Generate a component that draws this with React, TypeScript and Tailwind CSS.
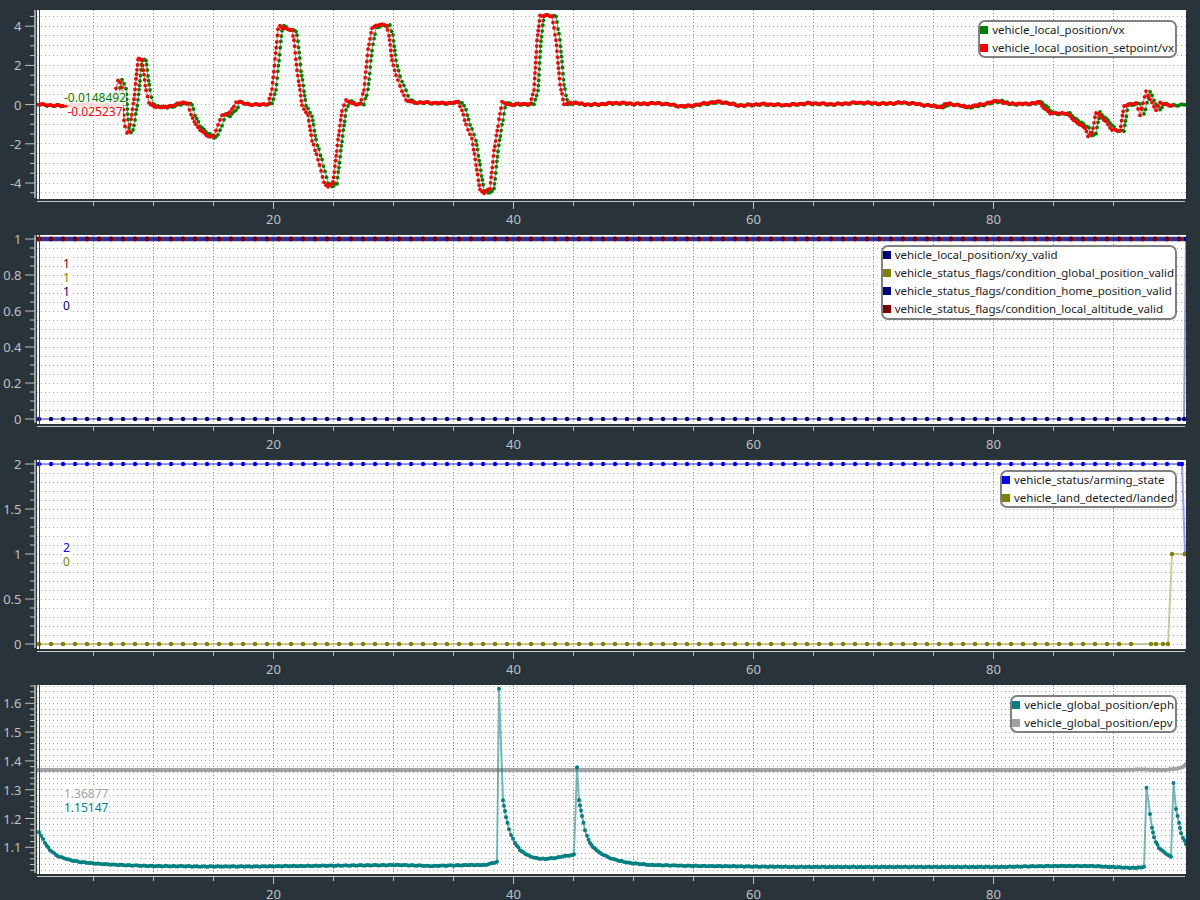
type Pt = [number, number]

const PLOT_L = 37
const PLOT_W = 1149
const PLOT_H = 189
const GRID_X = Array.from({ length: 18 }, (_, k) => 93.5 + 60 * k)

// split long segments so markers sit close on the flat parts and wider on slopes
function resample(keys: Pt[], flat: number, steep: number, maxSlope = Infinity): Pt[] {
  const out: Pt[] = []
  keys.forEach((p, i) => {
    if (i === 0) {
      out.push(p)
      return
    }
    const q = keys[i - 1]
    const dx = p[0] - q[0]
    const dy = p[1] - q[1]
    const slope = Math.abs(dy / (dx || 1))
    const len = Math.hypot(dx, dy)
    const n = slope > maxSlope ? 1 : Math.max(1, Math.round(Math.max(dx / flat, len / steep)))
    for (let j = 1; j <= n; j++) {
      out.push([q[0] + (dx * j) / n, q[1] + (dy * j) / n])
    }
  })
  return out
}

function wobble(pts: Pt[], amt: number, fine: number): Pt[] {
  return pts.map(([x, y]) => [x, y + amt * Math.sin(x * 0.13) + (amt / 2) * Math.sin(x * 0.41) + fine * Math.sin(x * 2.3)])
}

const vxKeys: Pt[] = [
  [37, 105], [63, 105], [100, 105], [114, 104], [116, 88], [118, 80], [120, 83], [122, 88], [124, 120], [125, 127],
  [127, 133], [129, 131], [131, 120], [134, 100], [136, 80], [138, 60], [139, 59], [142, 60], [144, 75], [146, 90],
  [149, 103], [152, 105], [156, 106], [165, 107], [175, 105], [183, 103], [188, 104], [191, 115], [196, 125], [200, 129],
  [206, 134], [210, 137], [214, 135], [218, 125], [222, 115], [226, 116], [230, 112], [234, 107], [236, 102], [250, 104],
  [268, 104], [272, 90], [275, 60], [278, 30], [280, 26], [284, 29], [292, 30], [294, 40], [297, 70], [300, 90],
  [302, 105], [308, 115], [312, 140], [318, 160], [324, 183], [328, 187], [333, 183], [338, 140], [342, 110], [346, 100],
  [352, 103], [360, 104], [364, 90], [368, 50], [372, 28], [380, 25], [386, 25], [389, 35], [392, 60], [396, 75],
  [400, 85], [406, 100], [414, 103], [430, 103], [458, 102], [462, 110], [466, 125], [472, 140], [476, 165], [480, 190],
  [484, 193], [490, 188], [494, 150], [498, 125], [502, 102], [510, 105], [530, 104], [534, 90], [537, 40], [540, 15],
  [546, 15], [552, 16], [556, 40], [560, 85], [564, 105], [570, 103], [585, 104], [650, 103], [680, 106], [720, 102],
  [740, 105], [800, 104], [870, 103], [900, 103], [930, 105], [941, 107], [946, 104], [960, 106], [965, 107], [980, 104],
  [998, 101], [1005, 104], [1030, 103], [1038, 102], [1044, 108], [1050, 114], [1066, 113], [1072, 118], [1085, 128], [1088, 136],
  [1092, 133], [1096, 113], [1106, 122], [1112, 130], [1120, 130], [1124, 105], [1136, 103], [1140, 115], [1146, 92], [1150, 100],
  [1156, 110], [1160, 103], [1172, 105],
]

const redVx = wobble(resample(vxKeys, 2, 5.5), 0.6, 0.5)
const greenVx = wobble(
  resample(
    vxKeys.map(([x, y]) => [x + 4, y + 0.3] as Pt).concat([[1186, 104]]),
    2,
    5.5,
  ),
  0.5,
  0.7,
)

const every12 = (to: number, y: number): Pt[] => {
  const pts: Pt[] = []
  for (let x = 39; x <= to; x += 12) pts.push([x, y])
  return pts
}

const ephKeys: Pt[] = [
  [39, 832], [45, 843], [50, 850], [56, 855], [60, 857], [70, 860], [80, 862], [100, 864], [120, 865], [150, 866],
  [200, 866.5], [250, 866.5], [300, 866], [400, 865], [430, 866], [470, 865], [485, 865], [497, 862], [499, 689], [503, 800],
  [506, 817], [509, 829], [511, 835], [515, 843], [520, 850], [527, 855], [535, 858], [545, 859], [555, 858], [565, 856],
  [573, 855], [574, 854], [577, 767], [579, 800], [582, 816], [585, 830], [587, 836], [590, 843], [593, 847], [600, 853],
  [610, 858], [620, 861], [630, 863], [650, 865], [700, 866], [800, 867], [900, 867], [1000, 867], [1050, 866], [1090, 866],
  [1135, 868], [1144, 867], [1146.5, 788], [1150, 814], [1152, 828], [1154, 837], [1156, 842], [1159, 848], [1165, 853], [1171, 857],
  [1173.5, 783], [1176, 809], [1179, 823], [1181, 833], [1183, 838], [1186, 844],
]

const epvKeys: Pt[] = [[37, 770], [1120, 770], [1140, 769.5], [1165, 770], [1178, 768.5], [1183, 767], [1186, 764]]

type Series = { color: string; pts: Pt[]; r?: number; line?: number; alpha?: number }

type PanelDef = {
  top: number
  y0: number
  perUnit: number
  minor: number
  majorEvery: number
  series: Series[]
  legend: { name: string; color: string }[]
  legendH: string
  labels: { text: string; color: string }[]
  labelPos: string
}

const panels: PanelDef[] = [
  {
    top: 10,
    y0: 104.6,
    perUnit: 19.6,
    minor: 0.5,
    majorEvery: 4,
    series: [
      { color: "#008000", pts: greenVx, r: 1.9, line: 1.2 },
      { color: "#ff0000", pts: redVx, r: 1.9, line: 1.2 },
    ],
    legend: [
      { name: "vehicle_local_position/vx", color: "#008000" },
      { name: "vehicle_local_position_setpoint/vx", color: "#ff0000" },
    ],
    legendH: "h-[38px]",
    labels: [
      { text: "-0.0148492", color: "#008000" },
      { text: "-0.025237", color: "#ff0000" },
    ],
    labelPos: "left-[27px] top-[81px]",
  },
  {
    top: 235,
    y0: 419,
    perUnit: 180,
    minor: 0.05,
    majorEvery: 4,
    series: [
      { color: "#000080", pts: [...every12(1184, 419), [1184, 419], [1186, 239]], r: 2.2, alpha: 0.4 },
      { color: "#000080", pts: [[37, 239], [1186, 239]], r: 0, line: 4.5, alpha: 0.8 },
      { color: "#800000", pts: every12(1186, 239), r: 2.4, line: 0 },
    ],
    legend: [
      { name: "vehicle_local_position/xy_valid", color: "#000080" },
      { name: "vehicle_status_flags/condition_global_position_valid", color: "#808000" },
      { name: "vehicle_status_flags/condition_home_position_valid", color: "#000080" },
      { name: "vehicle_status_flags/condition_local_altitude_valid", color: "#800000" },
    ],
    legendH: "h-[75px]",
    labels: [
      { text: "1", color: "#800000" },
      { text: "1", color: "#808000" },
      { text: "1", color: "#000080" },
      { text: "0", color: "#000080" },
    ],
    labelPos: "left-[26px] top-[21.5px]",
  },
  {
    top: 460,
    y0: 644,
    perUnit: 90,
    minor: 0.1,
    majorEvery: 5,
    series: [
      { color: "#0000ff", pts: [...every12(1182, 464), [1182, 464], [1185, 554]], r: 2.2, alpha: 0.4 },
      {
        color: "#808000",
        pts: [...every12(1140, 644), [1151, 644], [1156, 644], [1163, 644], [1168, 644], [1172, 554], [1185, 554]],
        r: 2.2,
        alpha: 0.4,
      },
    ],
    legend: [
      { name: "vehicle_status/arming_state", color: "#0000ff" },
      { name: "vehicle_land_detected/landed", color: "#808000" },
    ],
    legendH: "h-[38px]",
    labels: [
      { text: "2", color: "#0000ff" },
      { text: "0", color: "#808000" },
    ],
    labelPos: "left-[26px] top-[81px]",
  },
  {
    top: 685,
    y0: 847.3 + 1.1 * 288,
    perUnit: 288,
    minor: 0.02,
    majorEvery: 5,
    series: [
      { color: "#a0a0a4", pts: resample(epvKeys, 1.5, 5), r: 2 },
      { color: "#008080", pts: wobble(resample(ephKeys, 2, 6, 6), 0, 0.3), r: 2 },
    ],
    legend: [
      { name: "vehicle_global_position/eph", color: "#008080" },
      { name: "vehicle_global_position/epv", color: "#a0a0a4" },
    ],
    legendH: "h-[38px]",
    labels: [
      { text: "1.36877", color: "#a0a0a4" },
      { text: "1.15147", color: "#008080" },
    ],
    labelPos: "left-[27px] top-[101.5px]",
  },
]

function ticksFor(p: PanelDef) {
  const out: { y: number; label?: string }[] = []
  for (let i = -200; i <= 200; i++) {
    const v = i * p.minor
    const y = p.y0 - v * p.perUnit
    if (y < p.top || y > p.top + PLOT_H - 1) continue
    out.push({ y, label: i % p.majorEvery === 0 ? String(parseFloat(v.toFixed(2))) : undefined })
  }
  return out
}

function YAxis({ p }: { p: PanelDef }) {
  const ticks = ticksFor(p)
  return (
    <svg width={37} height={PLOT_H} viewBox={`0 ${p.top} 37 ${PLOT_H}`} className="overflow-visible">
      <line x1={35} x2={35} y1={p.top} y2={p.top + PLOT_H - 1} stroke="#c0c0c0" strokeWidth={1.5} />
      {ticks.map((t) => (
        <g key={t.y}>
          <line x1={t.label ? 25 : 30} x2={35} y1={t.y} y2={t.y} stroke="#c0c0c0" strokeWidth={1} />
          {t.label && (
            <text x={21.5} y={t.y + 5} textAnchor="end" className="fill-[#c0c0c0] text-[13px]">
              {t.label}
            </text>
          )}
        </g>
      ))}
    </svg>
  )
}

function XAxis() {
  return (
    <svg width={PLOT_W} height={26} viewBox={`${PLOT_L} 0 ${PLOT_W} 26`} className="overflow-visible">
      <line x1={PLOT_L} x2={1185} y1={2.5} y2={2.5} stroke="#c8c8c8" strokeWidth={1} />
      {GRID_X.map((x, k) => {
        const labelled = (k + 1) % 4 === 0
        return (
          <g key={x}>
            <line x1={x} x2={x} y1={2.5} y2={labelled ? 10 : 7} stroke="#c0c0c0" strokeWidth={1} />
            {labelled && (
              <text x={x} y={25} textAnchor="middle" className="fill-[#c0c0c0] text-[13px]">
                {(k + 1) * 5}
              </text>
            )}
          </g>
        )
      })}
    </svg>
  )
}

function Plot({ p }: { p: PanelDef }) {
  const ticks = ticksFor(p)
  return (
    <svg width={PLOT_W} height={PLOT_H} viewBox={`${PLOT_L} ${p.top} ${PLOT_W} ${PLOT_H}`} className="block">
      {ticks.map((t) => (
        <line
          key={t.y}
          x1={PLOT_L}
          x2={PLOT_L + PLOT_W}
          y1={Math.floor(t.y) + 0.5}
          y2={Math.floor(t.y) + 0.5}
          stroke="#a8a8a8"
          strokeDasharray="1 3"
          shapeRendering="crispEdges"
        />
      ))}
      {GRID_X.map((x) => (
        <line
          key={x}
          x1={x}
          x2={x}
          y1={p.top}
          y2={p.top + PLOT_H}
          stroke="#8c8c8c"
          strokeDasharray="1 2"
          shapeRendering="crispEdges"
        />
      ))}
      {p.series.map((s, i) => (
        <g key={i}>
          {s.line !== 0 && (
            <polyline
              points={s.pts.map((q) => q.join(",")).join(" ")}
              fill="none"
              stroke={s.color}
              strokeWidth={s.line ?? 2}
              strokeOpacity={s.alpha ?? 0.55}
            />
          )}
          {!!s.r && s.pts.map((q, j) => <circle key={j} cx={q[0]} cy={q[1]} r={s.r} fill={s.color} />)}
        </g>
      ))}
      <line x1={39.5} x2={39.5} y1={p.top} y2={p.top + PLOT_H} stroke="#e00000" strokeWidth={1} />
    </svg>
  )
}

function Panel({ p }: { p: PanelDef }) {
  return (
    <div className="grid grid-cols-[37px_1149px] grid-rows-[189px_26px]">
      <YAxis p={p} />
      <div className="relative overflow-hidden bg-white">
        <Plot p={p} />
        <div className={`absolute flex flex-col items-center text-xs leading-[14px] ${p.labelPos}`}>
          {p.labels.map((l, i) => (
            <span key={i} className="bg-white/85" style={{ color: l.color }}>
              {l.text}
            </span>
          ))}
        </div>
        <div
          className={`absolute right-[9px] top-[9.5px] flex flex-col justify-center rounded-[7px] border-2 border-[#808080] bg-white pr-[1px] text-[11.5px] text-[#1c1c1c] ${p.legendH}`}
        >
          {p.legend.map((l) => (
            <div key={l.name} className="flex h-[18px] shrink-0 items-center gap-1 whitespace-nowrap">
              <span className="h-2 w-2 shrink-0" style={{ backgroundColor: l.color }} />
              {l.name}
            </div>
          ))}
        </div>
      </div>
      <div />
      <XAxis />
    </div>
  )
}

export default function App() {
  return (
    <div className="flex h-[900px] w-[1200px] flex-col gap-[10px] bg-[#29333a] pt-[10px] font-['Noto_Sans',sans-serif]">
      {panels.map((p) => (
        <Panel key={p.top} p={p} />
      ))}
    </div>
  )
}
